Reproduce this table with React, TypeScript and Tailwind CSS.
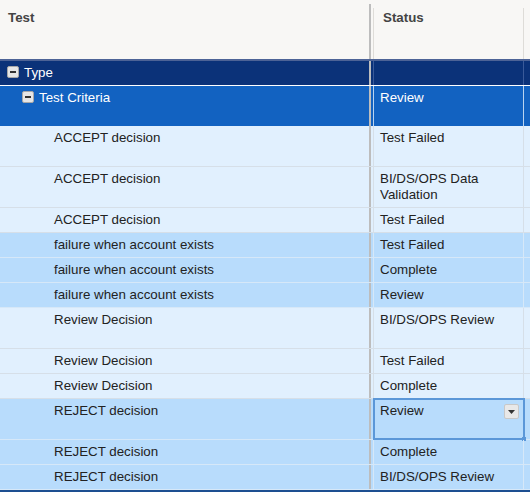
import React from "react";

type Row = { test: string; status: string; tall?: boolean; sel?: boolean; edit?: boolean };

const rows: Row[] = [
  { test: "ACCEPT decision", status: "Test Failed", tall: true },
  { test: "ACCEPT decision", status: "BI/DS/OPS Data Validation", tall: true },
  { test: "ACCEPT decision", status: "Test Failed" },
  { test: "failure when account exists", status: "Test Failed", sel: true },
  { test: "failure when account exists", status: "Complete", sel: true },
  { test: "failure when account exists", status: "Review", sel: true },
  { test: "Review Decision", status: "BI/DS/OPS Review", tall: true },
  { test: "Review Decision", status: "Test Failed" },
  { test: "Review Decision", status: "Complete" },
  { test: "REJECT decision", status: "Review", tall: true, sel: true, edit: true },
  { test: "REJECT decision", status: "Complete", sel: true },
  { test: "REJECT decision", status: "BI/DS/OPS Review", sel: true },
];

function Minus() {
  return (
    <span className="flex h-[12px] w-[12px] items-center justify-center rounded-[2px] border border-[#a8a8a8] bg-[#e6e6e6]">
      <span className="h-[2px] w-[6px] bg-[#333]" />
    </span>
  );
}

function Divider() {
  return (
    <div className="flex w-[4px] shrink-0">
      <div className="w-[2px] bg-[#bdbdbd]" />
      <div className="w-[2px]" />
    </div>
  );
}

export default function App() {
  return (
    <div
      className="w-[530px] h-[492px] overflow-hidden bg-white text-[13.33px] leading-[16px] text-[#222]"
      style={{ fontFamily: '"Liberation Sans", Arial, sans-serif' }}
    >
      {/* header */}
      <div className="flex h-[61px] border-b-2 border-[#4d6396] bg-[#f8f7f5] font-bold text-[#444]">
        <div className="w-[369px] shrink-0 pl-[8px] pt-[10px]">Test</div>
        <div className="flex w-[4px] shrink-0 pt-[4px]">
          <div className="w-[2px] bg-[#bdbdbd]" />
        </div>
        <div className="mt-[8px] w-[151px] shrink-0 border-x border-[#dedcd8] pl-[9px] pt-[2px]">Status</div>
        <div className="flex-1" />
      </div>

      {/* Type group row */}
      <div className="flex h-[25px] border-b border-white bg-[#0b3279] text-white">
        <div className="flex w-[369px] shrink-0 items-start gap-[5px] pl-[7px] pt-[4px]">
          <span className="mt-[1px]"><Minus /></span>
          <span>Type</span>
        </div>
        <Divider />
        <div className="w-[151px] shrink-0 border-x border-[#3a5a99]" />
        <div className="flex-1" />
      </div>

      {/* Test Criteria row */}
      <div className="flex h-[40px] bg-[#1262c1] text-white">
        <div className="flex w-[369px] shrink-0 items-start gap-[5px] pl-[22px] pt-[4px]">
          <span className="mt-[1px]"><Minus /></span>
          <span>Test Criteria</span>
        </div>
        <Divider />
        <div className="w-[151px] shrink-0 border-x border-[#b9d3f0] pl-[6px] pt-[4px]">Review</div>
        <div className="flex-1" />
      </div>

      {rows.map((r, i) => (
        <div
          key={i}
          className={
            "flex border-b " +
            (r.tall ? "h-[41px] " : "h-[25px] ") +
            (r.sel ? "bg-[#b8dcfc] border-[#d6e8f8]" : "bg-[#e1f0fe] border-[#d6dfe8]")
          }
        >
          <div className="w-[369px] shrink-0 pl-[54px] pt-[4px] whitespace-nowrap">{r.test}</div>
          <Divider />
          <div
            className={
              "relative w-[151px] shrink-0 border-x pl-[6px] pr-[6px] pt-[4px] " +
              (r.sel ? "border-[#d6e8f8]" : "border-[#d6dfe8]")
            }
          >
            {r.edit && (
              <div className="absolute -left-[1px] -top-[1px] h-[42px] w-[152px] border-2 border-[#5b97d8]">
                <div className="absolute -bottom-[3px] -right-[3px] h-[4px] w-[4px] bg-[#5b97d8]" />
                <div className="absolute right-[4px] top-[4px] flex h-[15px] w-[15px] items-center justify-center rounded-[2px] border border-[#c8c8c8] bg-[#e8e8e8]">
                  <svg width="7" height="4" viewBox="0 0 7 4">
                    <path d="M0 0 L7 0 L3.5 4 Z" fill="#333" />
                  </svg>
                </div>
              </div>
            )}
            <div className="relative">{r.status}</div>
          </div>
          <div className="flex-1" />
        </div>
      ))}
      <div className="h-[2px] bg-[#1d4f91]" />
    </div>
  );
}
